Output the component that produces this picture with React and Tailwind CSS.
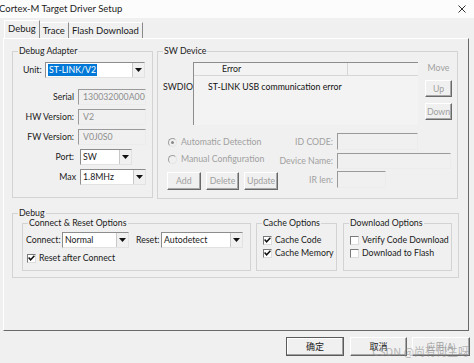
import React from 'react';

const Arrow = () => (
  <span className="flex h-full w-[12px] items-center justify-center border-l border-[#c8c8c8] bg-[#f0f0f0]">
    <svg width="7" height="4" viewBox="0 0 7 4">
      <path d="M0 0h7L3.5 4z" fill="#111" />
    </svg>
  </span>
);

const Combo = ({ className, children }) => (
  <div className={`flex h-[16px] items-stretch border border-t-[#8d8d8d] border-l-[#8d8d8d] border-r-[#e2e2e2] border-b-[#e2e2e2] bg-white ${className}`}>
    <div className="flex flex-1 items-center overflow-hidden whitespace-nowrap pl-[2px]">{children}</div>
    <Arrow />
  </div>
);

const Field = ({ className, children }) => (
  <div className={`flex items-center overflow-hidden whitespace-nowrap border border-t-[#9a9a9a] border-l-[#9a9a9a] border-r-[#ececec] border-b-[#ececec] bg-[#f0f0f0] pl-[4px] text-[#8e8e8e] ${className}`}>
    {children}
  </div>
);

const Btn = ({ className, children }) => (
  <div className={`flex items-center justify-center border border-t-white border-l-white border-r-[#696969] border-b-[#696969] shadow-[inset_-1px_-1px_0_#a8a8a8] ${className}`}>
    {children}
  </div>
);

const Check = ({ checked }) => (
  <span className="flex h-[9px] w-[9px] shrink-0 items-center justify-center border border-t-[#7a7a7a] border-l-[#7a7a7a] border-r-[#dcdcdc] border-b-[#dcdcdc] bg-white">
    {checked && (
      <svg width="7" height="6" viewBox="0 0 7 6">
        <path d="M0.6 2.6 L2.6 4.8 L6.4 0.8" stroke="#111" strokeWidth="1.5" fill="none" />
      </svg>
    )}
  </span>
);

const Radio = ({ on }) => (
  <span className="flex h-[9px] w-[9px] shrink-0 items-center justify-center rounded-full border border-t-[#a0a0a0] border-l-[#a0a0a0] border-r-[#e4e4e4] border-b-[#e4e4e4] bg-[#f0f0f0]">
    {on && <span className="h-[3px] w-[3px] rounded-full bg-[#8a8a8a]" />}
  </span>
);

const Group = ({ title, className, children }) => (
  <fieldset className={`border border-[#d3d3d3] ${className}`}>
    <legend className="ml-[5px] px-[1px] leading-[12px]">{title}</legend>
    {children}
  </fieldset>
);

export default function App() {
  return (
    <div className="relative h-[363px] w-[474px] overflow-hidden bg-[#f0f0f0] font-['Lato',sans-serif] text-[8.75px] leading-[12px] text-[#1a1a1a]">
      {/* title bar */}
      <div className="flex h-[18px] items-center justify-between bg-[#fcfcfc] pr-[8px]">
        <span className="-ml-[1px] text-[9.5px] text-[#222]">Cortex-M Target Driver Setup</span>
        <svg width="8" height="8" viewBox="0 0 8 8">
          <path d="M0.5 0.5L7.5 7.5M7.5 0.5L0.5 7.5" stroke="#333" strokeWidth="1" />
        </svg>
      </div>

      {/* tabs */}
      <div className="flex h-[20px] items-end pl-[4px] text-[9.5px]">
        <div className="flex h-[18px] items-center border-t border-l border-r border-t-white border-l-white border-r-[#8a8a8a] px-[3px] pb-[2px]">Debug</div>
        <div className="flex h-[16px] items-center border-t border-r border-t-white border-r-[#8a8a8a] px-[3px]">Trace</div>
        <div className="flex h-[16px] items-center border-t border-r border-t-white border-r-[#8a8a8a] px-[3px]">Flash Download</div>
      </div>

      {/* tab panel */}
      <div className="ml-[3px] h-[293px] w-[466px] border border-t-white border-l-white border-r-[#696969] border-b-[#696969] pl-[8px] pt-[6px]">
        <div className="flex items-start gap-[4px]">
          <Group title="Debug Adapter" className="h-[153px] w-[141px]">
            <div className="mt-[5px] flex h-[16px] items-center pl-[10px]">
              <span className="w-[22px]">Unit:</span>
              <Combo className="w-[100px]">
                <span className="bg-[#0078d7] px-[1px] text-white">ST-LINK/V2</span>
              </Combo>
            </div>
            <div className="mt-[11px] flex flex-col gap-[4px]">
              <div className="flex h-[16px] items-center">
                <span className="w-[61px] text-right">Serial</span>
                <Field className="ml-[4px] h-[16px] w-[68px]">130032000A000C</Field>
              </div>
              <div className="flex h-[16px] items-center">
                <span className="w-[61px] text-right">HW Version:</span>
                <Field className="ml-[4px] h-[16px] w-[68px]">V2</Field>
              </div>
              <div className="flex h-[16px] items-center">
                <span className="w-[61px] text-right">FW Version:</span>
                <Field className="ml-[4px] h-[16px] w-[68px]">V0J0S0</Field>
              </div>
              <div className="flex h-[16px] items-center">
                <span className="w-[61px] text-right">Port:</span>
                <Combo className="ml-[6px] w-[52px]">SW</Combo>
              </div>
              <div className="flex h-[16px] items-center">
                <span className="w-[63px] text-right">Max</span>
                <Combo className="ml-[4px] w-[66px]">1.8MHz</Combo>
              </div>
            </div>
          </Group>

          <Group title="SW Device" className="h-[154px] w-[301px]">
            <div className="mt-[5px] flex">
              <span className="ml-[5px] w-[30px] pt-[19px]">SWDIO</span>
              <div className="h-[63px] w-[225px] border-t border-l border-t-[#8d8d8d] border-l-[#8d8d8d] bg-[#f3f3f3]">
                <div className="flex h-[13px] border-b border-[#d6d6d6]">
                  <div className="w-[154px] border-r border-[#d6d6d6] pl-[28px] leading-[12px]">Error</div>
                  <div className="flex-1" />
                </div>
                <div className="pl-[14px] pt-[5px] whitespace-nowrap text-[#111]">ST-LINK USB communication error</div>
              </div>
              <div className="ml-[7px] flex w-[27px] flex-col items-center text-[#a0a0a0]">
                <span>Move</span>
                <Btn className="mt-[6px] h-[17px] w-[27px]">Up</Btn>
                <Btn className="mt-[6px] h-[17px] w-[27px]">Down</Btn>
              </div>
            </div>

            <div className="mt-[6px] flex text-[#a0a0a0]">
              <div className="flex w-[120px] flex-col pl-[9px]">
                <div className="mt-[5px] flex h-[12px] items-center gap-[4px] pl-[1px] whitespace-nowrap">
                  <Radio on />
                  <span>Automatic Detection</span>
                </div>
                <div className="mt-[5px] flex h-[12px] items-center gap-[4px] pl-[1px] whitespace-nowrap">
                  <Radio />
                  <span>Manual Configuration</span>
                </div>
                <div className="mt-[7px] flex gap-[5px]">
                  <Btn className="h-[18px] w-[37px]">Add</Btn>
                  <Btn className="h-[18px] w-[37px]">Delete</Btn>
                  <Btn className="h-[18px] w-[37px]">Update</Btn>
                </div>
              </div>
              <div className="mt-[2px] flex flex-col gap-[2px]">
                <div className="flex h-[17px] items-center">
                  <span className="flex w-[55px] justify-end whitespace-nowrap">ID CODE:</span>
                  <Field className="ml-[4px] h-[17px] w-[81px]" />
                </div>
                <div className="flex h-[17px] items-center">
                  <span className="flex w-[55px] justify-end whitespace-nowrap">Device Name:</span>
                  <Field className="ml-[4px] h-[16px] w-[114px]" />
                </div>
                <div className="flex h-[17px] items-center">
                  <span className="flex w-[55px] justify-end whitespace-nowrap">IR len:</span>
                  <Field className="ml-[4px] h-[17px] w-[49px]" />
                </div>
              </div>
            </div>
          </Group>
        </div>

        <Group title="Debug" className="mt-[8px] h-[71px] w-[447px]">
          <div className="-mt-[2px] flex pl-[9px]">
            <Group title="Connect & Reset Options" className="h-[54px] w-[229px]">
              <div className="mt-[3px] flex h-[16px] items-center pl-[3px]">
                <span className="w-[36px]">Connect:</span>
                <Combo className="w-[67px]">Normal</Combo>
                <span className="ml-[7px] w-[25px]">Reset:</span>
                <Combo className="w-[82px]">Autodetect</Combo>
              </div>
              <div className="mt-[4px] flex h-[12px] items-center gap-[3px] pl-[4px]">
                <Check checked />
                <span>Reset after Connect</span>
              </div>
            </Group>
            <Group title="Cache Options" className="ml-[5px] h-[54px] w-[81px]">
              <div className="mt-[5px] flex h-[12px] items-center gap-[3px] pl-[6px]">
                <Check checked />
                <span>Cache Code</span>
              </div>
              <div className="mt-[1px] flex h-[12px] items-center gap-[3px] pl-[6px] whitespace-nowrap">
                <Check checked />
                <span>Cache Memory</span>
              </div>
            </Group>
            <Group title="Download Options" className="ml-[6px] h-[54px] w-[109px]">
              <div className="mt-[5px] flex h-[12px] items-center gap-[3px] overflow-hidden whitespace-nowrap pl-[6px]">
                <Check />
                <span>Verify Code Download</span>
              </div>
              <div className="mt-[1px] flex h-[12px] items-center gap-[3px] whitespace-nowrap pl-[6px]">
                <Check />
                <span>Download to Flash</span>
              </div>
            </Group>
          </div>
        </Group>
      </div>

      {/* dialog buttons */}
      <div className="mt-[6px] flex justify-end pr-[4px] font-['Noto_Sans_CJK_SC',sans-serif] text-[9px]">
        <div className="flex h-[19px] w-[58px] items-center justify-center border border-[#5a5a5a] shadow-[inset_-1px_-1px_0_#a0a0a0,inset_1px_1px_0_#fff]">确定</div>
        <Btn className="ml-[6px] h-[19px] w-[57px]">取消</Btn>
        <Btn className="ml-[5px] h-[19px] w-[58px] text-[#a0a0a0]">应用(A)</Btn>
      </div>

      <span className="absolute bottom-[6px] right-[5px] font-['Noto_Sans_CJK_SC',sans-serif] text-[11px] text-[#8a8a8a]/60">CSDN @尚有何生呀</span>
    </div>
  );
}
